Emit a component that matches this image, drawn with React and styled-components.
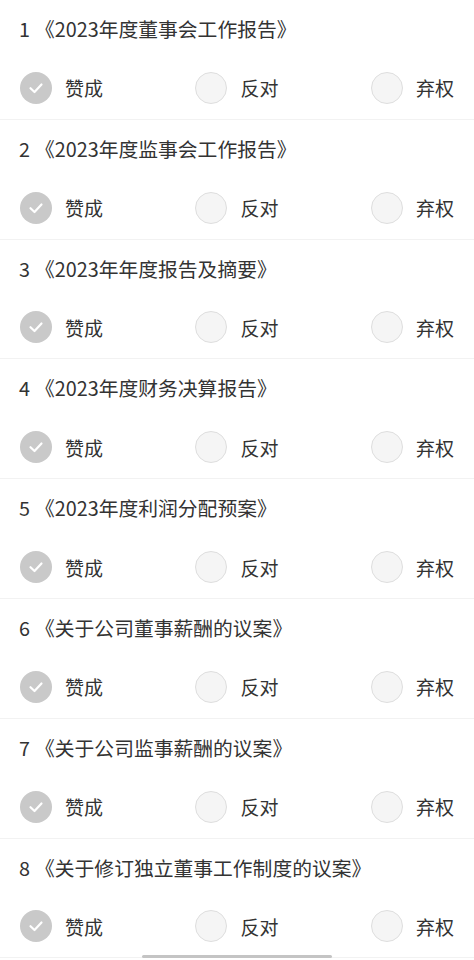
import React from "react";
import styled, { createGlobalStyle } from "styled-components";

const Global = createGlobalStyle`
  html, body { margin: 0; padding: 0; background: #ffffff; }
  body { font-family: "Noto Sans CJK SC", "Noto Sans", sans-serif; }
`;

const Page = styled.div`
  width: 474px;
  height: 960px;
  background: #fff;
  position: relative;
  overflow: hidden;
`;

const Item = styled.section`
  display: flex;
  flex-direction: column;
  border-bottom: 1px solid #f2f2f2;
`;

const Title = styled.div`
  height: 57px;
  display: flex;
  align-items: center;
  padding: 0 19px;
  font-size: 19.8px;
  color: #333;
  white-space: nowrap;
`;

const Num = styled.span`
  margin-right: 5px;
`;

const Options = styled.div`
  height: 61.8px;
  display: flex;
  align-items: center;
  justify-content: space-between;
  padding: 0 20px;
`;

const Option = styled.label`
  display: flex;
  align-items: center;
  gap: 13px;
  font-size: 19px;
  color: #333;
`;

const Circle = styled.span`
  width: 32px;
  height: 32px;
  box-sizing: border-box;
  border-radius: 50%;
  display: flex;
  align-items: center;
  justify-content: center;
  background: ${(p) => (p.$checked ? "#c9c9c9" : "#f5f5f5")};
  border: ${(p) => (p.$checked ? "none" : "1px solid #dedede")};
`;

const HomeBar = styled.div`
  position: absolute;
  left: 142px;
  bottom: 2px;
  width: 190px;
  height: 3px;
  border-radius: 2px;
  background: #c4c4c4;
`;

const items = [
  "2023年度董事会工作报告",
  "2023年度监事会工作报告",
  "2023年年度报告及摘要",
  "2023年度财务决算报告",
  "2023年度利润分配预案",
  "关于公司董事薪酬的议案",
  "关于公司监事薪酬的议案",
  "关于修订独立董事工作制度的议案",
];

const Check = () => (
  <svg width="18" height="18" viewBox="0 0 18 18">
    <path d="M3.5 9.2 L7.5 13 L14.5 5.5" fill="none" stroke="#fff" strokeWidth="2.2" strokeLinecap="round" strokeLinejoin="round" />
  </svg>
);

export default function App() {
  return (
    <Page>
      <Global />
      {items.map((t, i) => (
        <Item key={i}>
          <Title>
            <Num>{i + 1}</Num>《{t}》
          </Title>
          <Options>
            <Option>
              <Circle $checked>
                <Check />
              </Circle>
              赞成
            </Option>
            <Option>
              <Circle />
              反对
            </Option>
            <Option>
              <Circle />
              弃权
            </Option>
          </Options>
        </Item>
      ))}
      <HomeBar />
    </Page>
  );
}
